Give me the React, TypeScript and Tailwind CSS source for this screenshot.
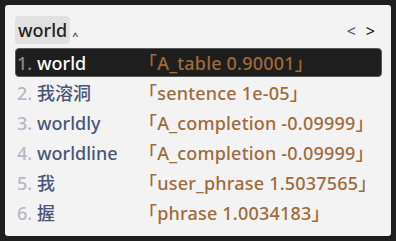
import React from "react";

const candidates = [
  { word: "world", comment: "「A_table 0.90001」" },
  { word: "我溶洞", comment: "「sentence 1e-05」" },
  { word: "worldly", comment: "「A_completion -0.09999」" },
  { word: "worldline", comment: "「A_completion -0.09999」" },
  { word: "我", comment: "「user_phrase 1.5037565」" },
  { word: "握", comment: "「phrase 1.0034183」" },
];

export default function App() {
  return (
    <div className="w-[396px] h-[241px] bg-[#1e1e1e] p-[5px] font-['Noto_Sans','Noto_Sans_CJK_SC',sans-serif]">
      <div className="w-[386px] h-[231px] bg-[#f3f3f3] rounded-[3px] px-[10px] pt-[10px]">
        {/* preedit */}
        <div className="flex items-center h-[29px]">
          <div className="bg-[#e1e1e1] rounded-[4px] px-[3px] h-[28px] flex items-center text-[18px] font-medium text-[#222] leading-none">
            world
          </div>
          <span className="ml-[2px] mt-[-2px] text-[15px] font-bold text-[#4a5578] leading-none">‸</span>
          <div className="ml-auto mr-[6px] flex gap-[10px] text-[16px] leading-none mt-[2px]">
            <span className="text-[#4a5578]">&lt;</span>
            <span className="text-[#111]">&gt;</span>
          </div>
        </div>
        {/* candidates */}
        <div className="mt-[4px] flex flex-col">
          {candidates.map((c, i) => {
            const active = i === 0;
            return (
              <div
                key={i}
                className={
                  "flex items-center h-[29px] mb-[1px] rounded-[4px] text-[18px] font-medium leading-none w-[367px] " +
                  (active ? "bg-[#1e1e1e] border border-[#5a5a5a]" : "border border-transparent")
                }
              >
                <span className={"w-[21px] pl-[1px] " + (active ? "text-[#8a8a8a]" : "text-[#b5b8c6]")}>
                  {i + 1}.
                </span>
                <span className={"w-[102px] " + (active ? "text-white" : "text-[#4a5578]")}>{c.word}</span>
                <span className="text-[#a06a3a] tracking-[0.2px]">{c.comment}</span>
              </div>
            );
          })}
        </div>
      </div>
    </div>
  );
}
